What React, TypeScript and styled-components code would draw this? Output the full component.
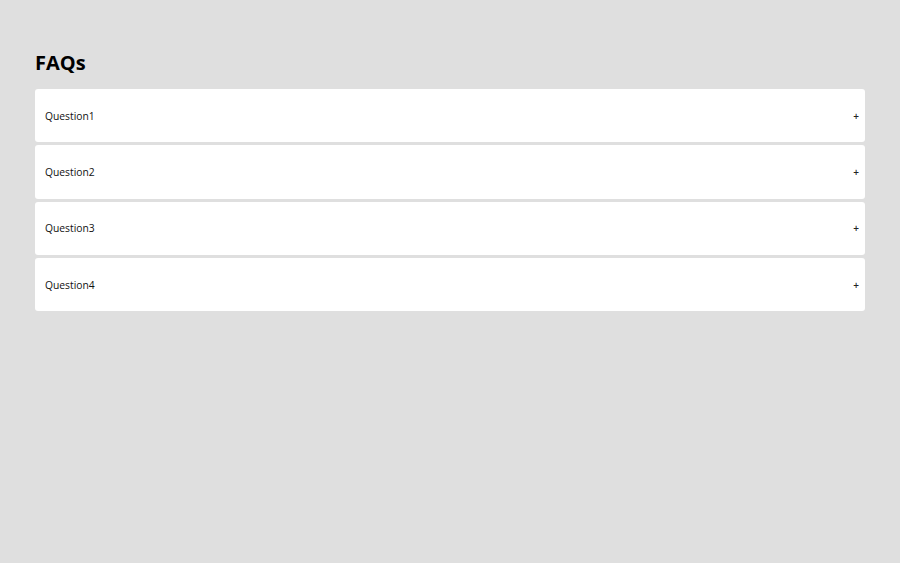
import React, { useState } from "react";
import styled, { createGlobalStyle } from "styled-components";

const GlobalStyle = createGlobalStyle`
  html, body {
    margin: 0;
    padding: 0;
    background: #dfdfdf;
    font-family: "Open Sans", "Liberation Sans", sans-serif;
    color: #111;
  }
`;

const Page = styled("main")`
  padding: 49px 35px 0;
`;

const Title = styled("h2")`
  margin: 0 0 13px;
  font-size: 20px;
  line-height: 27px;
  font-weight: 700;
  color: #000;
`;

const List = styled("div")`
  display: flex;
  flex-direction: column;
  gap: 3px;
`;

const Item = styled("div")`
  background: #fff;
  border-radius: 3px;
`;

const Header = styled("button")`
  display: flex;
  align-items: center;
  justify-content: space-between;
  width: 100%;
  height: 53.33px;
  padding: 0 4px 0 10px;
  border: 0;
  background: transparent;
  font-family: inherit;
  font-size: 10.3px;
  color: #111;
  cursor: pointer;
  text-align: left;
`;

const Sign = styled("span")`
  font-size: 10px;
  font-weight: 600;
  width: 10px;
  text-align: center;
  color: #222;
`;

const Answer = styled("div")`
  padding: 0 10px 14px;
  font-size: 11px;
  color: #333;
`;

const questions = ["Question1", "Question2", "Question3", "Question4"];

export default function App() {
  const [open, setOpen] = useState<number | null>(null);
  return (
    <>
      <GlobalStyle />
      <Page>
        <Title>FAQs</Title>
        <List>
          {questions.map((q, i) => (
            <Item key={q}>
              <Header onClick={() => setOpen(open === i ? null : i)}>
                {q}
                <Sign>{open === i ? "−" : "+"}</Sign>
              </Header>
              {open === i && <Answer>Answer{i + 1}</Answer>}
            </Item>
          ))}
        </List>
      </Page>
    </>
  );
}
